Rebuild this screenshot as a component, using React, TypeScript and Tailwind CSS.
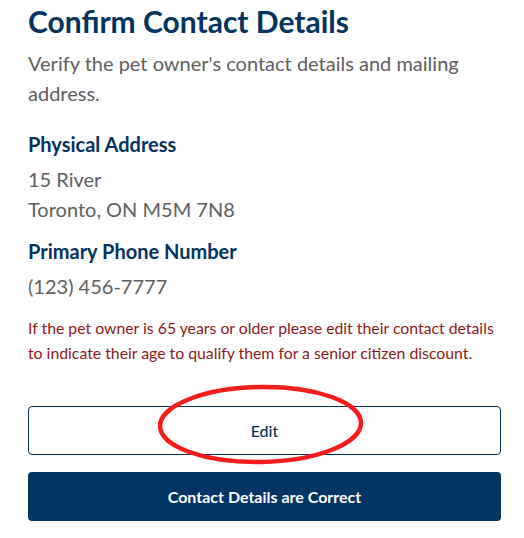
import React from "react";

export default function App() {
  return (
    <div className="relative w-[524px] h-[538px] bg-white overflow-hidden" style={{ fontFamily: "Lato, 'Open Sans', sans-serif" }}>
      <div className="pl-[28px] pr-[23px] pt-[3px]">
        <h1 className="text-[30px] leading-[36px] font-bold text-[#02335f]">Confirm Contact Details</h1>
        <p className="mt-[9px] text-[20px] leading-[30px] text-[#606060]">
          Verify the pet owner's contact details and mailing address.
        </p>
        <h2 className="mt-[21px] text-[20px] leading-[30px] font-bold text-[#02335f]">Physical Address</h2>
        <div className="mt-[5px] text-[20px] leading-[30px] text-[#606060]">
          <div>15 River</div>
          <div>Toronto, ON M5M 7N8</div>
        </div>
        <h2 className="mt-[12px] text-[20px] leading-[30px] font-bold text-[#02335f]">Primary Phone Number</h2>
        <div className="mt-[5px] text-[20px] leading-[30px] text-[#606060]">(123) 456-7777</div>
        <p className="mt-[14px] text-[15.8px] leading-[25px] text-[#8b1a1a]">
          If the pet owner is 65 years or older please edit their contact details to indicate their age to qualify them for a senior citizen discount.
        </p>
        <div className="mt-[41px] flex flex-col gap-[17px]">
          <button className="h-[49px] w-full rounded-[4px] border border-[#02335f] bg-white text-[16px] font-medium text-[#02335f]">
            Edit
          </button>
          <button className="h-[49px] w-full rounded-[4px] bg-[#033563] text-[16px] font-bold text-white">
            Contact Details are Correct
          </button>
        </div>
      </div>
      <svg className="absolute left-0 top-0 pointer-events-none" width="524" height="538">
        <ellipse cx="260.5" cy="424.5" rx="100.5" ry="37.5" fill="none" stroke="#f41c1c" strokeWidth="4.5" transform="rotate(-1 260.5 424.5)" />
      </svg>
    </div>
  );
}
